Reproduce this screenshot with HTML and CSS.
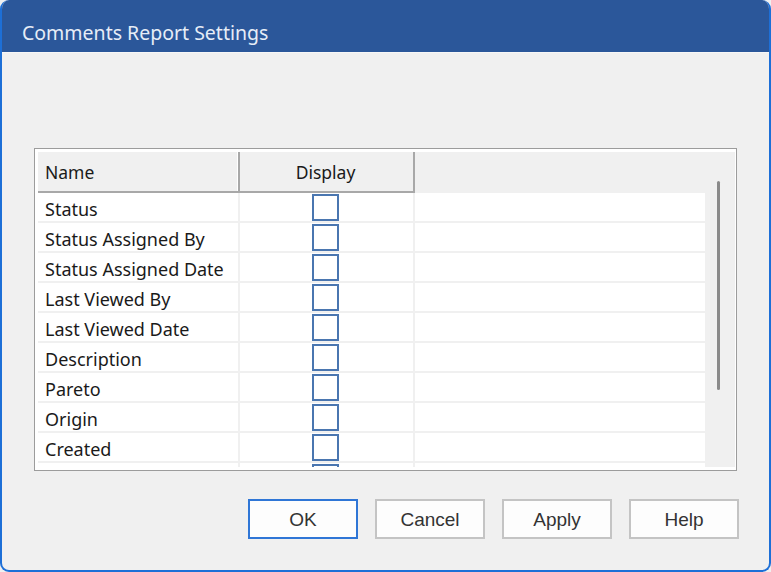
FILE: index.html
```html
<!DOCTYPE html>
<html lang="en">
<head>
    <meta charset="UTF-8">
    <meta name="viewport" content="width=device-width, initial-scale=1.0">
    <title>Comments Report Settings</title>
    <link rel="stylesheet" href="styles.css">
</head>
<body>
    <!-- Fenêtre -->
    <div class="window">
        <div class="titlebar">Comments Report Settings</div>

        <div class="content">
            <!-- Liste des colonnes -->
            <div class="listbox">
                <div class="grid">
                    <div class="head">
                        <div class="hcell col-name">Name</div>
                        <div class="hcell col-display">Display</div>
                        <div class="hfill"></div>
                    </div>
                    <div class="rows">
                        <div class="row"><div class="cell col-name">Status</div><div class="cell col-display"><span class="check"></span></div><div class="fill"></div></div>
                        <div class="row"><div class="cell col-name">Status Assigned By</div><div class="cell col-display"><span class="check"></span></div><div class="fill"></div></div>
                        <div class="row"><div class="cell col-name">Status Assigned Date</div><div class="cell col-display"><span class="check"></span></div><div class="fill"></div></div>
                        <div class="row"><div class="cell col-name">Last Viewed By</div><div class="cell col-display"><span class="check"></span></div><div class="fill"></div></div>
                        <div class="row"><div class="cell col-name">Last Viewed Date</div><div class="cell col-display"><span class="check"></span></div><div class="fill"></div></div>
                        <div class="row"><div class="cell col-name">Description</div><div class="cell col-display"><span class="check"></span></div><div class="fill"></div></div>
                        <div class="row"><div class="cell col-name">Pareto</div><div class="cell col-display"><span class="check"></span></div><div class="fill"></div></div>
                        <div class="row"><div class="cell col-name">Origin</div><div class="cell col-display"><span class="check"></span></div><div class="fill"></div></div>
                        <div class="row"><div class="cell col-name">Created</div><div class="cell col-display"><span class="check"></span></div><div class="fill"></div></div>
                        <div class="row"><div class="cell col-name"></div><div class="cell col-display"><span class="check"></span></div><div class="fill"></div></div>
                    </div>
                </div>
                <div class="scrollbar"><div class="thumb"></div></div>
            </div>

            <!-- Boutons -->
            <div class="buttons">
                <button class="btn default">OK</button>
                <button class="btn">Cancel</button>
                <button class="btn">Apply</button>
                <button class="btn">Help</button>
            </div>
        </div>
    </div>
</body>
</html>
```

FILE: styles.css
```css
        /* Styles principaux */
        body {
            margin: 0;
            padding: 0;
            background-color: #f0f0f0;
            font-family: "Noto Sans", sans-serif;
        }

        .window {
            width: 771px;
            height: 572px;
            box-sizing: border-box;
            border: 2px solid #1d6fd7;
            border-top: none;
            border-radius: 9px;
            overflow: hidden;
            background-color: #f0f0f0;
        }

        .titlebar {
            height: 53px;
            box-sizing: border-box;
            background-color: #2b579a;
            color: #e6edf7;
            font-size: 19.5px;
            padding: 21px 0 0 20px;
            line-height: 24px;
            border-bottom: 1px solid #f7f7f7;
        }

        .content {
            padding: 95px 30px 0 32px;
        }

        .listbox {
            display: flex;
            width: 703px;
            height: 323px;
            box-sizing: border-box;
            border: 1px solid #9c9c9c;
            padding: 3px 1px 3px 3px;
            background-color: #fff;
        }

        .grid {
            width: 667px;
            overflow: hidden;
        }

        .head {
            display: flex;
            height: 41px;
        }

        .hcell {
            height: 41px;
            box-sizing: border-box;
            background-color: #f0f0f0;
            border-right: 2px solid #a8a8a8;
            border-bottom: 2px solid #a8a8a8;
            font-size: 17.5px;
            color: #1a1a1a;
            line-height: 40px;
        }

        .hcell.col-name {
            padding-left: 7px;
            box-shadow: inset -1px 0 0 #fff;
        }

        .hcell.col-display {
            text-align: center;
            padding-right: 2px;
        }

        .col-name {
            width: 202px;
        }

        .col-display {
            width: 175px;
        }

        .hfill {
            flex: 1;
            background-color: #f0f0f0;
        }

        .row {
            display: flex;
            height: 30px;
            box-sizing: border-box;
            border-bottom: 2px solid #f0f0f0;
        }

        .cell {
            box-sizing: border-box;
            border-right: 2px solid #f0f0f0;
            font-size: 18px;
            color: #1a1a1a;
            line-height: 28px;
        }

        .cell.col-name {
            padding: 2px 0 0 7px;
            white-space: nowrap;
        }

        .cell.col-display {
            display: flex;
            justify-content: center;
            padding-right: 3px;
        }

        .fill {
            flex: 1;
        }

        .check {
            display: block;
            width: 27px;
            height: 27px;
            margin-top: 1px;
            box-sizing: border-box;
            border: 2px solid #4a76b0;
            background-color: #fff;
        }

        .scrollbar {
            width: 30px;
            background-color: #f0f0f0;
            padding-top: 29px;
            box-sizing: border-box;
        }

        .thumb {
            width: 3px;
            height: 209px;
            margin-left: 12px;
            border-radius: 2px;
            background-color: #8a8a8a;
        }

        .buttons {
            display: flex;
            justify-content: flex-end;
            gap: 17px;
            margin-top: 28px;
        }

        .btn {
            width: 110px;
            height: 40px;
            box-sizing: border-box;
            background-color: #fdfdfd;
            border: 2px solid #c4c4c4;
            font-family: "Liberation Sans", Arial, sans-serif;
            font-size: 19px;
            color: #333;
            padding: 2px 0 0;
        }

        .btn.default {
            border-color: #2f76d6;
        }
```
